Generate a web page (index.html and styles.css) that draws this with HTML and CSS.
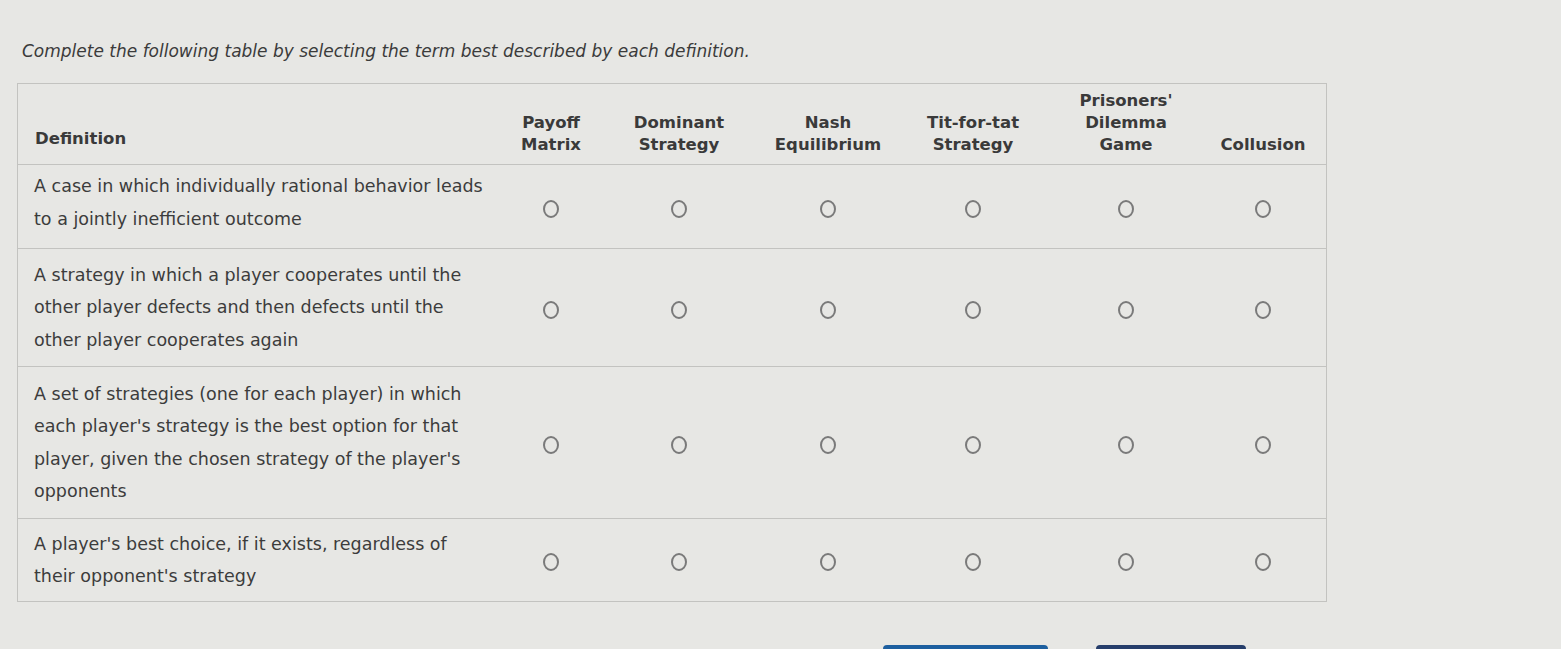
FILE: index.html
```html
<!DOCTYPE html>
<html>
<head>
<meta charset="utf-8">
<link rel="stylesheet" href="styles.css">
</head>
<body>
<div class="page">
  <p class="prompt">Complete the following table by selecting the term best described by each definition.</p>
  <table class="terms">
    <thead>
      <tr>
        <th class="c-def">Definition</th>
        <th class="c-pay">Payoff<br>Matrix</th>
        <th class="c-dom">Dominant<br>Strategy</th>
        <th class="c-nash">Nash<br>Equilibrium</th>
        <th class="c-tit">Tit-for-tat<br>Strategy</th>
        <th class="c-pri">Prisoners'<br>Dilemma<br>Game</th>
        <th class="c-col">Collusion</th>
      </tr>
    </thead>
    <tbody>
      <tr class="r1">
        <td class="def">A case in which individually rational behavior leads to a jointly inefficient outcome</td>
        <td><span class="radio"></span></td><td><span class="radio"></span></td><td><span class="radio"></span></td><td><span class="radio"></span></td><td><span class="radio"></span></td><td><span class="radio"></span></td>
      </tr>
      <tr class="r2">
        <td class="def">A strategy in which a player cooperates until the other player defects and then defects until the other player cooperates again</td>
        <td><span class="radio"></span></td><td><span class="radio"></span></td><td><span class="radio"></span></td><td><span class="radio"></span></td><td><span class="radio"></span></td><td><span class="radio"></span></td>
      </tr>
      <tr class="r3">
        <td class="def">A set of strategies (one for each player) in which each player's strategy is the best option for that player, given the chosen strategy of the player's opponents</td>
        <td><span class="radio"></span></td><td><span class="radio"></span></td><td><span class="radio"></span></td><td><span class="radio"></span></td><td><span class="radio"></span></td><td><span class="radio"></span></td>
      </tr>
      <tr class="r4">
        <td class="def">A player's best choice, if it exists, regardless of their opponent's strategy</td>
        <td><span class="radio"></span></td><td><span class="radio"></span></td><td><span class="radio"></span></td><td><span class="radio"></span></td><td><span class="radio"></span></td><td><span class="radio"></span></td>
      </tr>
    </tbody>
  </table>
  <div class="actions">
    <span class="btn btn-primary"></span>
    <span class="btn btn-secondary"></span>
  </div>
</div>
</body>
</html>
```

FILE: styles.css
```css
html, body {
  margin: 0;
  padding: 0;
  background: #e7e7e4;
}
body {
  font-family: "DejaVu Sans", Verdana, sans-serif;
  color: #3a3a3a;
  overflow: hidden;
}
.page {
  padding: 0 0 0 17px;
  height: 649px;
  position: relative;
}
.prompt {
  margin: 0;
  padding: 41px 0 0 5px;
  font-style: italic;
  font-size: 17px;
  line-height: 20px;
  color: #3b3b3b;
  height: 42px;
}
.terms {
  border-collapse: collapse;
  table-layout: fixed;
  width: 1308px;
  border: 1.5px solid #c3c3c0;
}
.terms th {
  font-weight: bold;
  font-size: 16.5px;
  line-height: 22px;
  color: #3a3a3a;
  vertical-align: bottom;
  text-align: center;
  padding: 0 0 8px 0;
  height: 66px;
  border-bottom: 1.5px solid #c3c3c0;
}
.terms th.c-def {
  text-align: left;
  padding-left: 17px;
  padding-bottom: 14px;
  width: 471px;
}
.c-pay { width: 90px; }
.c-dom { width: 166px; }
.c-nash { width: 132px; }
.c-tit { width: 158px; }
.c-pri { width: 148px; }
.c-col { width: 126px; }
.terms td {
  border-bottom: 1.5px solid #c3c3c0;
  text-align: center;
  vertical-align: middle;
  padding: 0;
}
.terms td.def {
  text-align: left;
  font-size: 17.5px;
  line-height: 32.5px;
  color: #3c3c3c;
  padding: 2px 22px 2px 16px;
}
.r1 td.def { padding-top: 0; padding-bottom: 8px; }
.r1 { height: 84px; }
.r2 { height: 118px; }
.r3 { height: 152px; }
.r4 { height: 83px; }
.radio {
  display: inline-block;
  width: 12px;
  height: 14px;
  border: 2px solid #7a7a7a;
  border-radius: 50%;
  vertical-align: middle;
  margin-top: 4px;
}
.actions {
  position: absolute;
  left: 883px;
  top: 645px;
  display: flex;
  gap: 48px;
}
.btn {
  display: block;
  height: 20px;
  border-radius: 4px 4px 0 0;
}
.btn-primary {
  width: 165px;
  background: #1d5f9f;
}
.btn-secondary {
  width: 150px;
  background: #263e6b;
}
```
